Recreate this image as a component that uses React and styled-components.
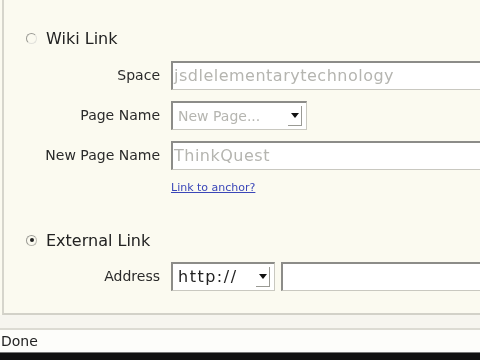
import React from 'react';
import styled, { createGlobalStyle } from 'styled-components';

const Global = createGlobalStyle`
  html, body { margin: 0; padding: 0; background: #fbfaf0; }
  body { font-family: "DejaVu Sans", Tahoma, sans-serif; }
`;

const Page = styled.div`
  width: 480px;
  height: 360px;
  overflow: hidden;
  display: flex;
  flex-direction: column;
  background: #fbfaf0;
  filter: blur(0.5px);
`;

const Panel = styled.div`
  flex: 1;
  margin-left: 2px;
  border-left: 2px solid #d6d5cc;
  border-bottom: 2px solid #d2d1c8;
  padding-top: 27px;
  box-sizing: border-box;
`;

const RadioRow = styled.label`
  display: flex;
  align-items: center;
  gap: 9px;
  margin-left: 22px;
  height: 22px;
  font-size: 16px;
  color: #222;
  margin-top: ${p => p.$top || 0}px;
`;

const Radio = styled.span`
  width: 9px;
  height: 9px;
  border-radius: 50%;
  border: 1px solid ${p => (p.$checked ? '#b9b8b0' : '#e2e2dc')};
  border-left-color: #9a9a94;
  border-top-color: #9a9a94;
  background: #fbfaf0;
  display: flex;
  align-items: center;
  justify-content: center;
  &::after {
    content: '';
    width: 4px;
    height: 4px;
    border-radius: 50%;
    background: ${p => (p.$checked ? '#222' : 'transparent')};
  }
`;

const Form = styled.div`
  display: grid;
  grid-template-columns: 156px 1fr;
  column-gap: 11px;
  align-items: center;
  margin-top: ${p => p.$top || 0}px;
`;

const Label = styled.span`
  text-align: right;
  font-size: 14px;
  color: #2a2a2a;
  height: ${p => p.$h || 40}px;
  line-height: ${p => p.$h || 40}px;
`;

const Field = styled.div`
  display: flex;
  align-items: center;
  gap: 6px;
`;

const TextBox = styled.div`
  box-sizing: border-box;
  height: 29px;
  width: ${p => p.$w || '340px'};
  background: #fff;
  border: 1px solid #c9c8c0;
  border-top: 2px solid #8c8c88;
  border-left: 2px solid #8c8c88;
  padding-left: 1px;
  font-size: 16px;
  letter-spacing: 0.5px;
  line-height: 25px;
  color: ${p => (p.$dim ? '#b5b5b0' : '#222')};
  white-space: nowrap;
  overflow: hidden;
`;

const Select = styled.div`
  box-sizing: border-box;
  height: 29px;
  width: ${p => p.$w}px;
  background: #fff;
  border: 1px solid #c9c8c0;
  border-top: 2px solid #8c8c88;
  border-left: 2px solid #8c8c88;
  display: flex;
  align-items: center;
  justify-content: space-between;
  padding: 0 4px 0 5px;
  font-size: ${p => (p.$dim ? 14 : 16)}px;
  letter-spacing: ${p => (p.$dim ? 0 : 1.5)}px;
  color: ${p => (p.$dim ? '#b5b5b0' : '#222')};
  white-space: nowrap;
`;

const Arrow = styled.span`
  width: 13px;
  height: 19px;
  flex: none;
  border-right: 1px solid #9a9a94;
  border-bottom: 1px solid #9a9a94;
  display: flex;
  align-items: center;
  justify-content: center;
  &::after {
    content: '';
    border-left: 4px solid transparent;
    border-right: 4px solid transparent;
    border-top: 5px solid #111;
  }
`;

const Anchor = styled.a`
  font-size: 11px;
  color: #3a46b8;
  text-decoration: underline;
  line-height: 20px;
`;

const Band = styled.div`
  height: 13px;
  background: #f6f5ef;
  border-bottom: 2px solid #dcdbd3;
`;

const StatusBar = styled.div`
  height: 22px;
  background: #fdfdfa;
  font-size: 14px;
  color: #222;
  line-height: 22px;
  padding-left: 1px;
`;

const BlackBar = styled.div`
  height: 7px;
  background: #111;
  border-top: 1px solid #777;
`;

export default function App() {
  return (
    <Page>
      <Global />
      <Panel>
        <RadioRow><Radio />Wiki Link</RadioRow>
        <Form $top={6}>
          <Label>Space</Label>
          <Field><TextBox $dim>jsdlelementarytechnology</TextBox></Field>
          <Label>Page Name</Label>
          <Field><Select $w={136} $dim>New Page... <Arrow /></Select></Field>
          <Label>New Page Name</Label>
          <Field><TextBox $dim>ThinkQuest</TextBox></Field>
          <Label $h={26} />
          <Field><Anchor>Link to anchor?</Anchor></Field>
        </Form>
        <RadioRow $top={28}><Radio $checked />External Link</RadioRow>
        <Form $top={5}>
          <Label>Address</Label>
          <Field>
            <Select $w={104}>http:// <Arrow /></Select>
            <TextBox $w="220px" />
          </Field>
        </Form>
      </Panel>
      <Band />
      <StatusBar>Done</StatusBar>
      <BlackBar />
    </Page>
  );
}
